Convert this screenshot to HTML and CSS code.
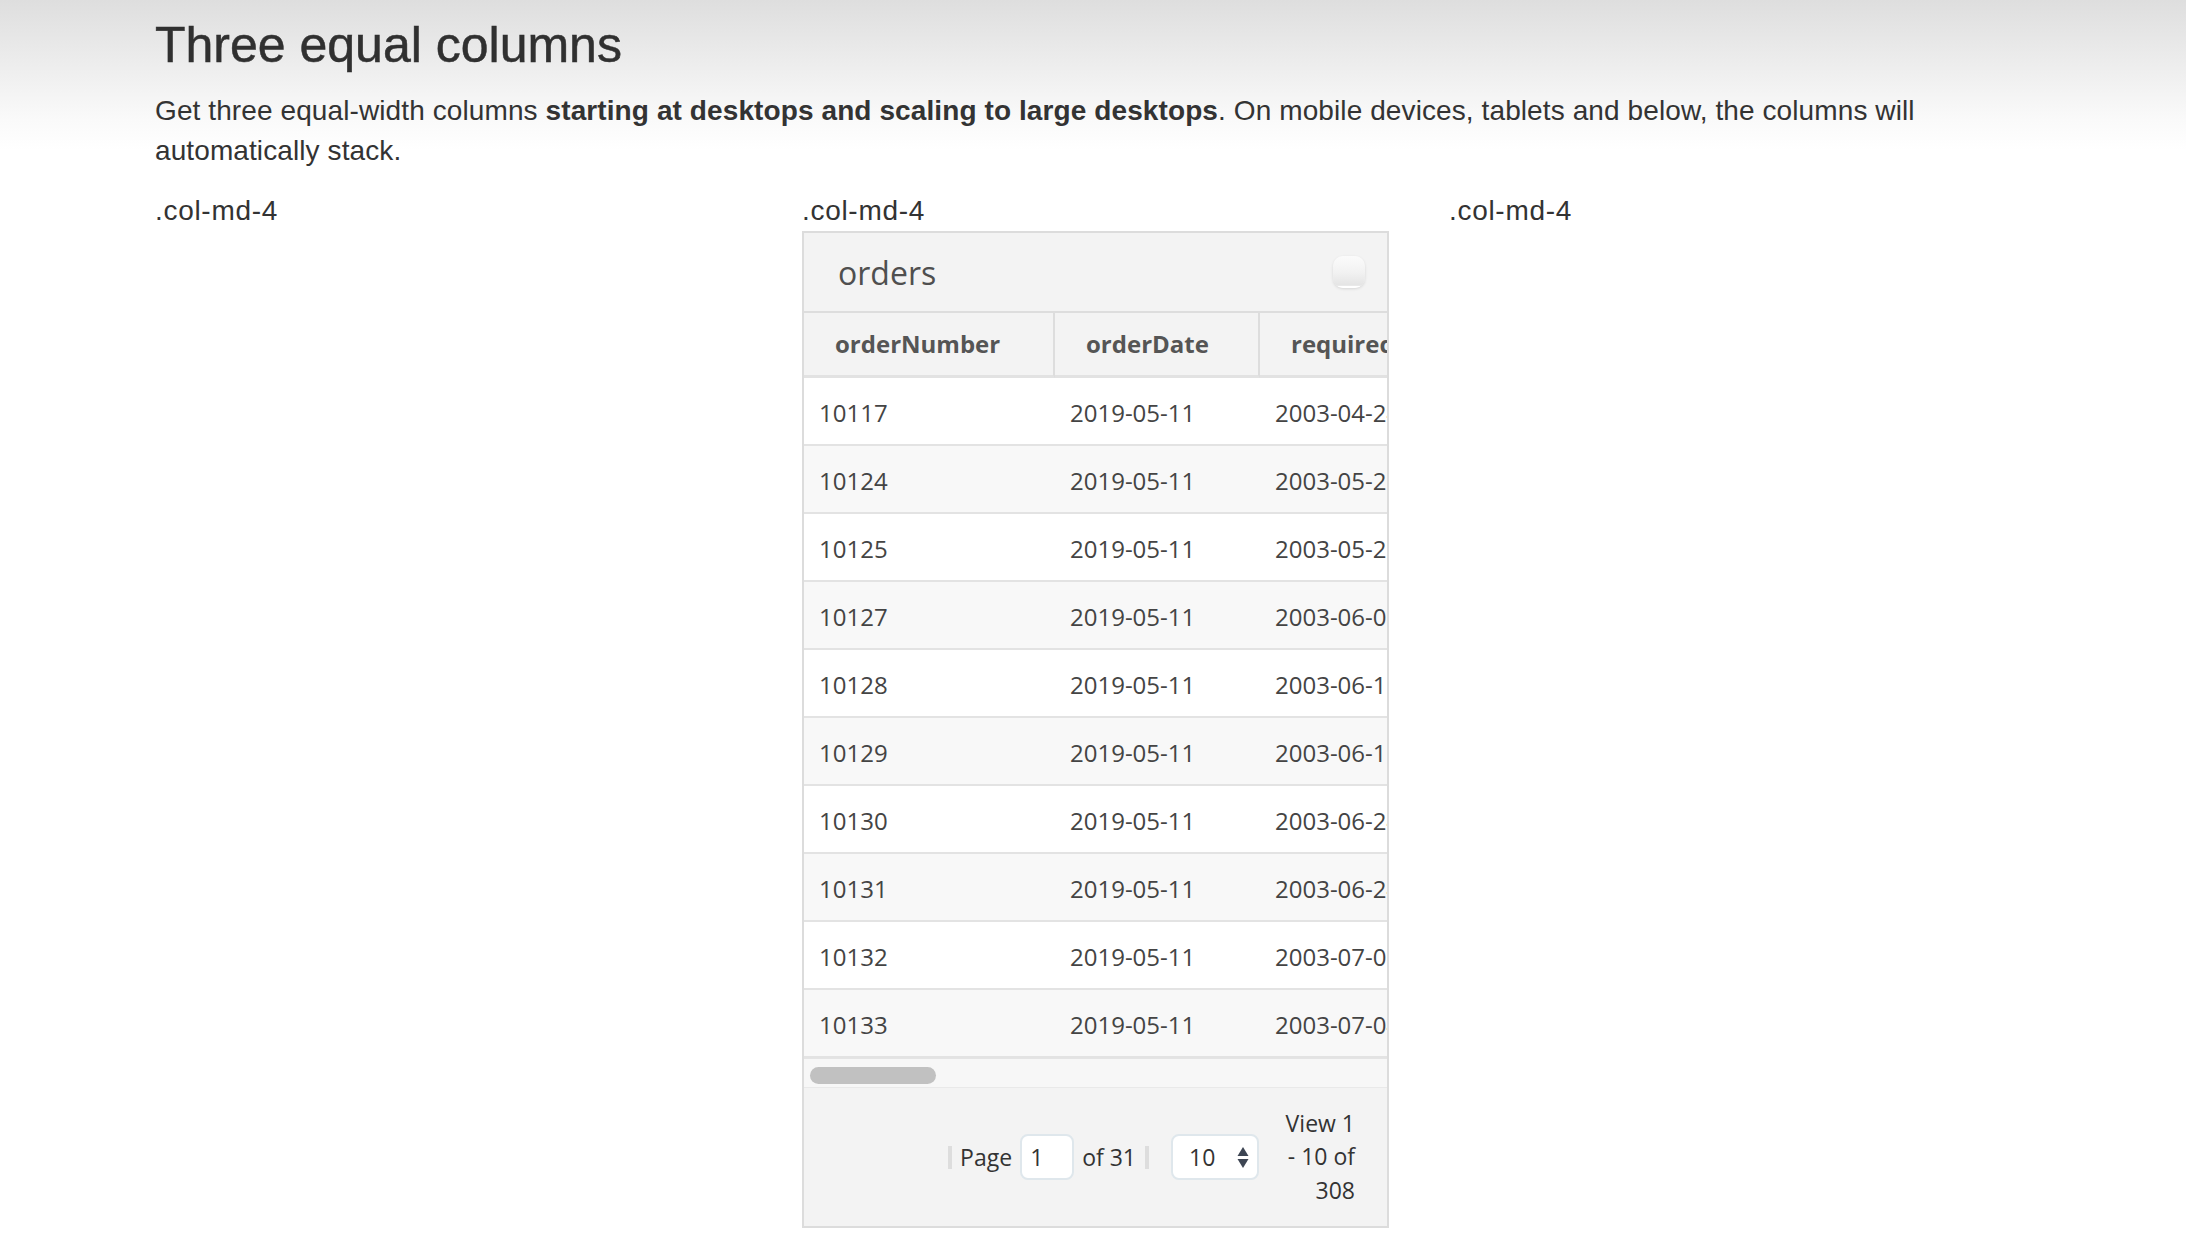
FILE: index.html
```html
<!DOCTYPE html>
<html lang="en">
<head>
<meta charset="utf-8">
<title>Three equal columns</title>
<link rel="stylesheet" href="styles.css">
</head>
<body>
<div class="page">
  <h1 class="title">Three equal columns</h1>
  <p class="lead">Get three equal-width columns <strong>starting at desktops and scaling to large desktops</strong>. On mobile devices, tablets and below, the columns will automatically stack.</p>
  <div class="cols">
    <div class="col"><div class="col-label">.col-md-4</div></div>
    <div class="col">
      <div class="col-label">.col-md-4</div>
      <div class="grid">
        <div class="grid-caption">
          <span class="caption-text">orders</span>
          <span class="toggle" aria-label="Toggle grid"></span>
        </div>
        <div class="grid-body">
          <table class="grid-table">
            <colgroup>
              <col class="c1"><col class="c2"><col class="c3"><col class="c4"><col class="c5"><col class="c6">
            </colgroup>
            <thead>
              <tr><th>orderNumber</th><th>orderDate</th><th>requiredDate</th><th>shippedDate</th><th>status</th><th>comments</th></tr>
            </thead>
            <tbody>
              <tr><td>10117</td><td>2019-05-11</td><td>2003-04-24</td><td>2003-04-17</td><td>Shipped</td><td></td></tr>
              <tr><td>10124</td><td>2019-05-11</td><td>2003-05-29</td><td>2003-05-25</td><td>Shipped</td><td></td></tr>
              <tr><td>10125</td><td>2019-05-11</td><td>2003-05-27</td><td>2003-05-24</td><td>Shipped</td><td></td></tr>
              <tr><td>10127</td><td>2019-05-11</td><td>2003-06-09</td><td>2003-06-06</td><td>Shipped</td><td></td></tr>
              <tr><td>10128</td><td>2019-05-11</td><td>2003-06-12</td><td>2003-06-11</td><td>Shipped</td><td></td></tr>
              <tr><td>10129</td><td>2019-05-11</td><td>2003-06-18</td><td>2003-06-14</td><td>Shipped</td><td></td></tr>
              <tr><td>10130</td><td>2019-05-11</td><td>2003-06-24</td><td>2003-06-21</td><td>Shipped</td><td></td></tr>
              <tr><td>10131</td><td>2019-05-11</td><td>2003-06-24</td><td>2003-06-21</td><td>Shipped</td><td></td></tr>
              <tr><td>10132</td><td>2019-05-11</td><td>2003-07-01</td><td>2003-06-28</td><td>Shipped</td><td></td></tr>
              <tr><td>10133</td><td>2019-05-11</td><td>2003-07-04</td><td>2003-07-03</td><td>Shipped</td><td></td></tr>
            </tbody>
          </table>
        </div>
        <div class="hscroll"><div class="hscroll-thumb"></div></div>
        <div class="pager">
          <span class="sep"></span>
          <span class="pager-label">Page</span>
          <span class="page-input">1</span>
          <span class="pager-of">of 31</span>
          <span class="sep sep-right"></span>
          <span class="page-size">
            <span class="page-size-value">10</span>
            <svg class="page-size-arrows" width="12" height="21" viewBox="0 0 12 21"><polygon points="6,0 11.5,9 0.5,9" fill="#3d4553"/><polygon points="0.5,12 11.5,12 6,21" fill="#3d4553"/></svg>
          </span>
          <span class="view-info">View 1 - 10 of 308</span>
        </div>
      </div>
    </div>
    <div class="col"><div class="col-label">.col-md-4</div></div>
  </div>
</div>
</body>
</html>
```

FILE: styles.css
```css
html, body {
  margin: 0;
  padding: 0;
}

body {
  min-height: 1258px;
  background-color: #fff;
  background-image: linear-gradient(to bottom, #dedede 0px, #fafafa 120px, #ffffff 150px);
  background-repeat: no-repeat;
  background-size: 100% 150px;
  font-family: "Liberation Sans", Arial, Helvetica, sans-serif;
  color: #333;
}

.page {
  padding: 18px 0 0 155px;
}

.title {
  margin: 0;
  font-size: 50px;
  line-height: 55px;
  font-weight: 500;
  color: #303030;
  -webkit-text-stroke: 0.5px #303030;
}

.lead {
  margin: 18px 0 20px;
  max-width: 1820px;
  font-size: 28px;
  line-height: 40px;
  letter-spacing: 0.1px;
  color: #333;
}

.lead strong {
  font-weight: 700;
}

.cols {
  display: grid;
  grid-template-columns: repeat(3, 647px);
}

.col-label {
  font-size: 28px;
  line-height: 40px;
  letter-spacing: 0.7px;
  color: #333;
}

/* grid panel */
.grid {
  width: 587px;
  box-sizing: border-box;
  border: 2px solid #dcdcdc;
  background: #f3f3f3;
  font-family: "Open Sans", "Liberation Sans", sans-serif;
}

.grid-caption {
  display: flex;
  align-items: center;
  justify-content: space-between;
  height: 78px;
  padding: 0 22px 0 34px;
  border-bottom: 2px solid #dddddd;
  font-size: 32px;
  color: #4f4f4f;
}

.toggle {
  display: block;
  flex-shrink: 0;
  width: 32px;
  height: 32px;
  box-sizing: border-box;
  border-radius: 10px;
  background: linear-gradient(to bottom, #fbfbfb 0%, #f2f2f2 50%, #e4e4e4 92%, #ffffff 93%, #ffffff 100%);
  box-shadow: 0 1px 3px rgba(0, 0, 0, 0.12);
}

.grid-body {
  overflow: hidden;
  background: #fff;
}

.grid-table {
  border-collapse: separate;
  border-spacing: 0;
  table-layout: fixed;
  width: 1500px;
}

.grid-table .c1 { width: 251px; }
.grid-table .c2 { width: 205px; }
.grid-table .c3 { width: 230px; }
.grid-table .c4 { width: 230px; }
.grid-table .c5 { width: 200px; }
.grid-table .c6 { width: 384px; }

.grid-table th {
  padding: 0 0 0 31px;
  height: 62px;
  line-height: 62px;
  text-align: left;
  font-size: 24px;
  font-weight: 700;
  color: #555;
  white-space: nowrap;
  overflow: hidden;
  background: #f3f3f3;
  border-right: 2px solid #dddddd;
  border-bottom: 3px solid #e2e2e2;
}

.grid-table td {
  padding: 4px 0 0 15px;
  line-height: 62px;
  font-size: 24px;
  color: #444;
  white-space: nowrap;
  overflow: hidden;
  border-bottom: 2px solid #e3e3e3;
}

.grid-table tbody tr:nth-child(even) td {
  background: #f8f8f8;
}

.hscroll {
  height: 28px;
  border-top: 1px solid #e4e4e4;
  border-bottom: 1px solid #e9e9e9;
  background: #f7f7f7;
}

.hscroll-thumb {
  margin: 8px 0 0 6px;
  width: 126px;
  height: 17px;
  border-radius: 9px;
  background: #c1c1c1;
}

.pager {
  display: flex;
  align-items: center;
  justify-content: flex-end;
  height: 138px;
  padding-right: 32px;
  font-size: 23px;
  color: #333;
}

.pager > * {
  flex-shrink: 0;
}

.sep {
  display: block;
  width: 4px;
  height: 23px;
  background: #dddddd;
  margin-right: 8px;
}

.sep-right {
  margin-left: 9px;
  margin-right: 22px;
}

.pager-label {
  margin-right: 8px;
}

.page-input {
  display: flex;
  align-items: center;
  box-sizing: border-box;
  width: 54px;
  height: 46px;
  padding-left: 8px;
  border: 2px solid #dfe7ec;
  border-radius: 8px;
  background: #fff;
  margin-right: 8px;
}

.page-size {
  display: flex;
  align-items: center;
  box-sizing: border-box;
  width: 88px;
  height: 46px;
  padding: 0 8px 0 16px;
  border: 2px solid #dfe7ec;
  border-radius: 8px;
  background: #fff;
  margin-right: 24px;
}

.page-size-arrows {
  margin-left: auto;
}

.view-info {
  width: 72px;
  text-align: right;
  line-height: 33.5px;
}
```
